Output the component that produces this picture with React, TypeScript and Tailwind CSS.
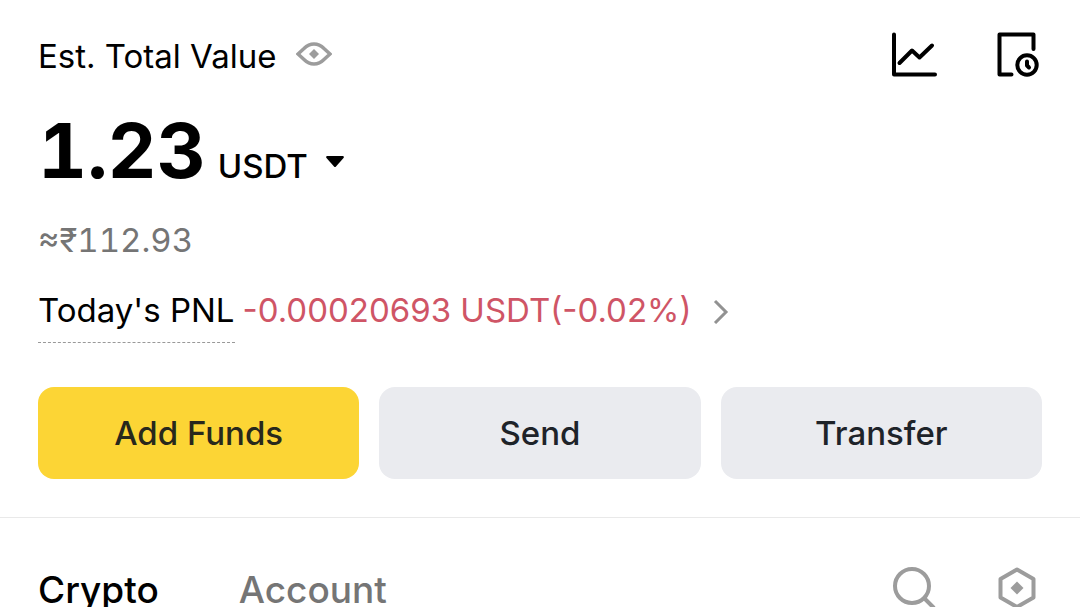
import { useState } from 'react';

function EyeIcon() {
  return (
    <svg width="36" height="24" viewBox="0 0 36 24" fill="none" aria-hidden="true">
      <path
        d="M2 12L8 6.500Q12.500 2 18 2T28 6.500L34 12L28 17.500Q23.500 22 18 22T8 17.500Z"
        stroke="#9c9c9c"
        strokeWidth="3.500"
      />
      <path d="M18 7L23 12L18 17L13 12Z" fill="#9c9c9c" />
    </svg>
  );
}

function ChartIcon() {
  return (
    <svg width="48" height="48" viewBox="0 0 48 48" fill="none" stroke="black" strokeWidth="4" strokeLinecap="round" strokeLinejoin="round" aria-hidden="true">
      <path d="M4 4.500V44.500H45" />
      <path d="M9.500 33L22 20.500L29.500 27.500L42 15.500" />
    </svg>
  );
}

function HistoryIcon() {
  return (
    <svg width="48" height="48" viewBox="0 0 48 48" fill="none" stroke="black" strokeWidth="4" strokeLinecap="round" strokeLinejoin="round" aria-hidden="true">
      <path d="M17.500 44.500H5.500V4.500H39.500V19" />
      <circle cx="33" cy="35" r="9.700" />
      <path d="M33 31.500V35.500L35 37.500" />
    </svg>
  );
}

function SearchIcon() {
  return (
    <svg width="44" height="44" viewBox="0 0 44 44" fill="none" stroke="#9c9c9c" strokeWidth="4" aria-hidden="true">
      <circle cx="20" cy="20" r="17" />
      <path d="M32 32L42 42" />
    </svg>
  );
}

function HexIcon() {
  return (
    <svg width="44" height="44" viewBox="0 0 44 44" fill="none" aria-hidden="true">
      <path d="M19 3.500L35.500 13V31.500L19 41L2.500 31.500V13Z" stroke="#9c9c9c" strokeWidth="4" strokeLinejoin="round" />
      <path d="M19 15.500L25.500 22L19 28.500L12.500 22Z" fill="#9c9c9c" />
    </svg>
  );
}

const actions = [
  { label: 'Add Funds', style: 'bg-[#fcd535] text-[#28281c]' },
  { label: 'Send', style: 'bg-[#eaebef] text-[#1e2329]' },
  { label: 'Transfer', style: 'bg-[#eaebef] text-[#1e2329]' },
];

const tabs = ['Crypto', 'Account'];

export default function App() {
  const [activeTab, setActiveTab] = useState('Crypto');

  return (
    <main className="h-screen overflow-hidden bg-white font-['Inter',sans-serif] text-black">
      <section className="px-[38px] pt-[30px]">
        <header className="flex items-start justify-between">
          <div className="flex items-start gap-5">
            <h1 className="pt-0.5 text-[33px] leading-[48px]">Est. Total Value</h1>
            <button aria-label="Hide balance" className="pt-3">
              <EyeIcon />
            </button>
          </div>
          <div className="flex items-center gap-14">
            <button aria-label="Analysis">
              <ChartIcon />
            </button>
            <button aria-label="History">
              <HistoryIcon />
            </button>
          </div>
        </header>

        <div className="mt-[26px] flex items-baseline gap-3">
          <span className="text-[76px] leading-[88px] font-bold tabular-nums">1.23</span>
          <button className="flex items-center gap-[18px] text-[33px] font-medium">
            USDT
            <svg width="18" height="24" viewBox="0 0 18 24" aria-hidden="true">
              <path d="M1 1H17Q18.500 1.500 17.500 3L10 11.500Q9 12.500 8 11.500L0.500 3Q-0.500 1.500 1 1Z" />
            </svg>
          </button>
        </div>

        <p className="mt-[22px] text-[33px] leading-[48px] text-[#757575] tabular-nums">≈₹112.93</p>

        <div className="mt-[22px] flex items-start">
          <span className="border-b border-dashed border-[#999999] pb-2 text-[33px] leading-[48px]">Today's PNL</span>
          <button className="ml-2 flex items-center gap-[22px] text-[33px] leading-[48px] text-[#cf5566]">
            -0.00020693 USDT(-0.02%)
            <svg width="16" height="28" viewBox="0 0 16 28" fill="none" stroke="#929292" strokeWidth="3" aria-hidden="true">
              <path d="M2 5L13 16L2 27" />
            </svg>
          </button>
        </div>

        <div className="mt-11 grid grid-cols-3 gap-5">
          {actions.map((action) => (
            <button key={action.label} className={`h-[92px] rounded-2xl pt-0.5 text-[33px] font-medium ${action.style}`}>
              {action.label}
            </button>
          ))}
        </div>
      </section>

      <section className="mt-[38px] flex items-start justify-between border-t border-[#e9e9e9] px-[38px] pt-12">
        <nav className="flex gap-20">
          {tabs.map((tab) => (
            <button
              key={tab}
              onClick={() => setActiveTab(tab)}
              className={`text-[37px] leading-[48px] font-medium ${activeTab === tab ? 'text-black' : 'text-[#757575]'}`}
            >
              {tab}
            </button>
          ))}
        </nav>
        <div className="flex gap-[62px]">
          <button aria-label="Search">
            <SearchIcon />
          </button>
          <button aria-label="Settings">
            <HexIcon />
          </button>
        </div>
      </section>
    </main>
  );
}
